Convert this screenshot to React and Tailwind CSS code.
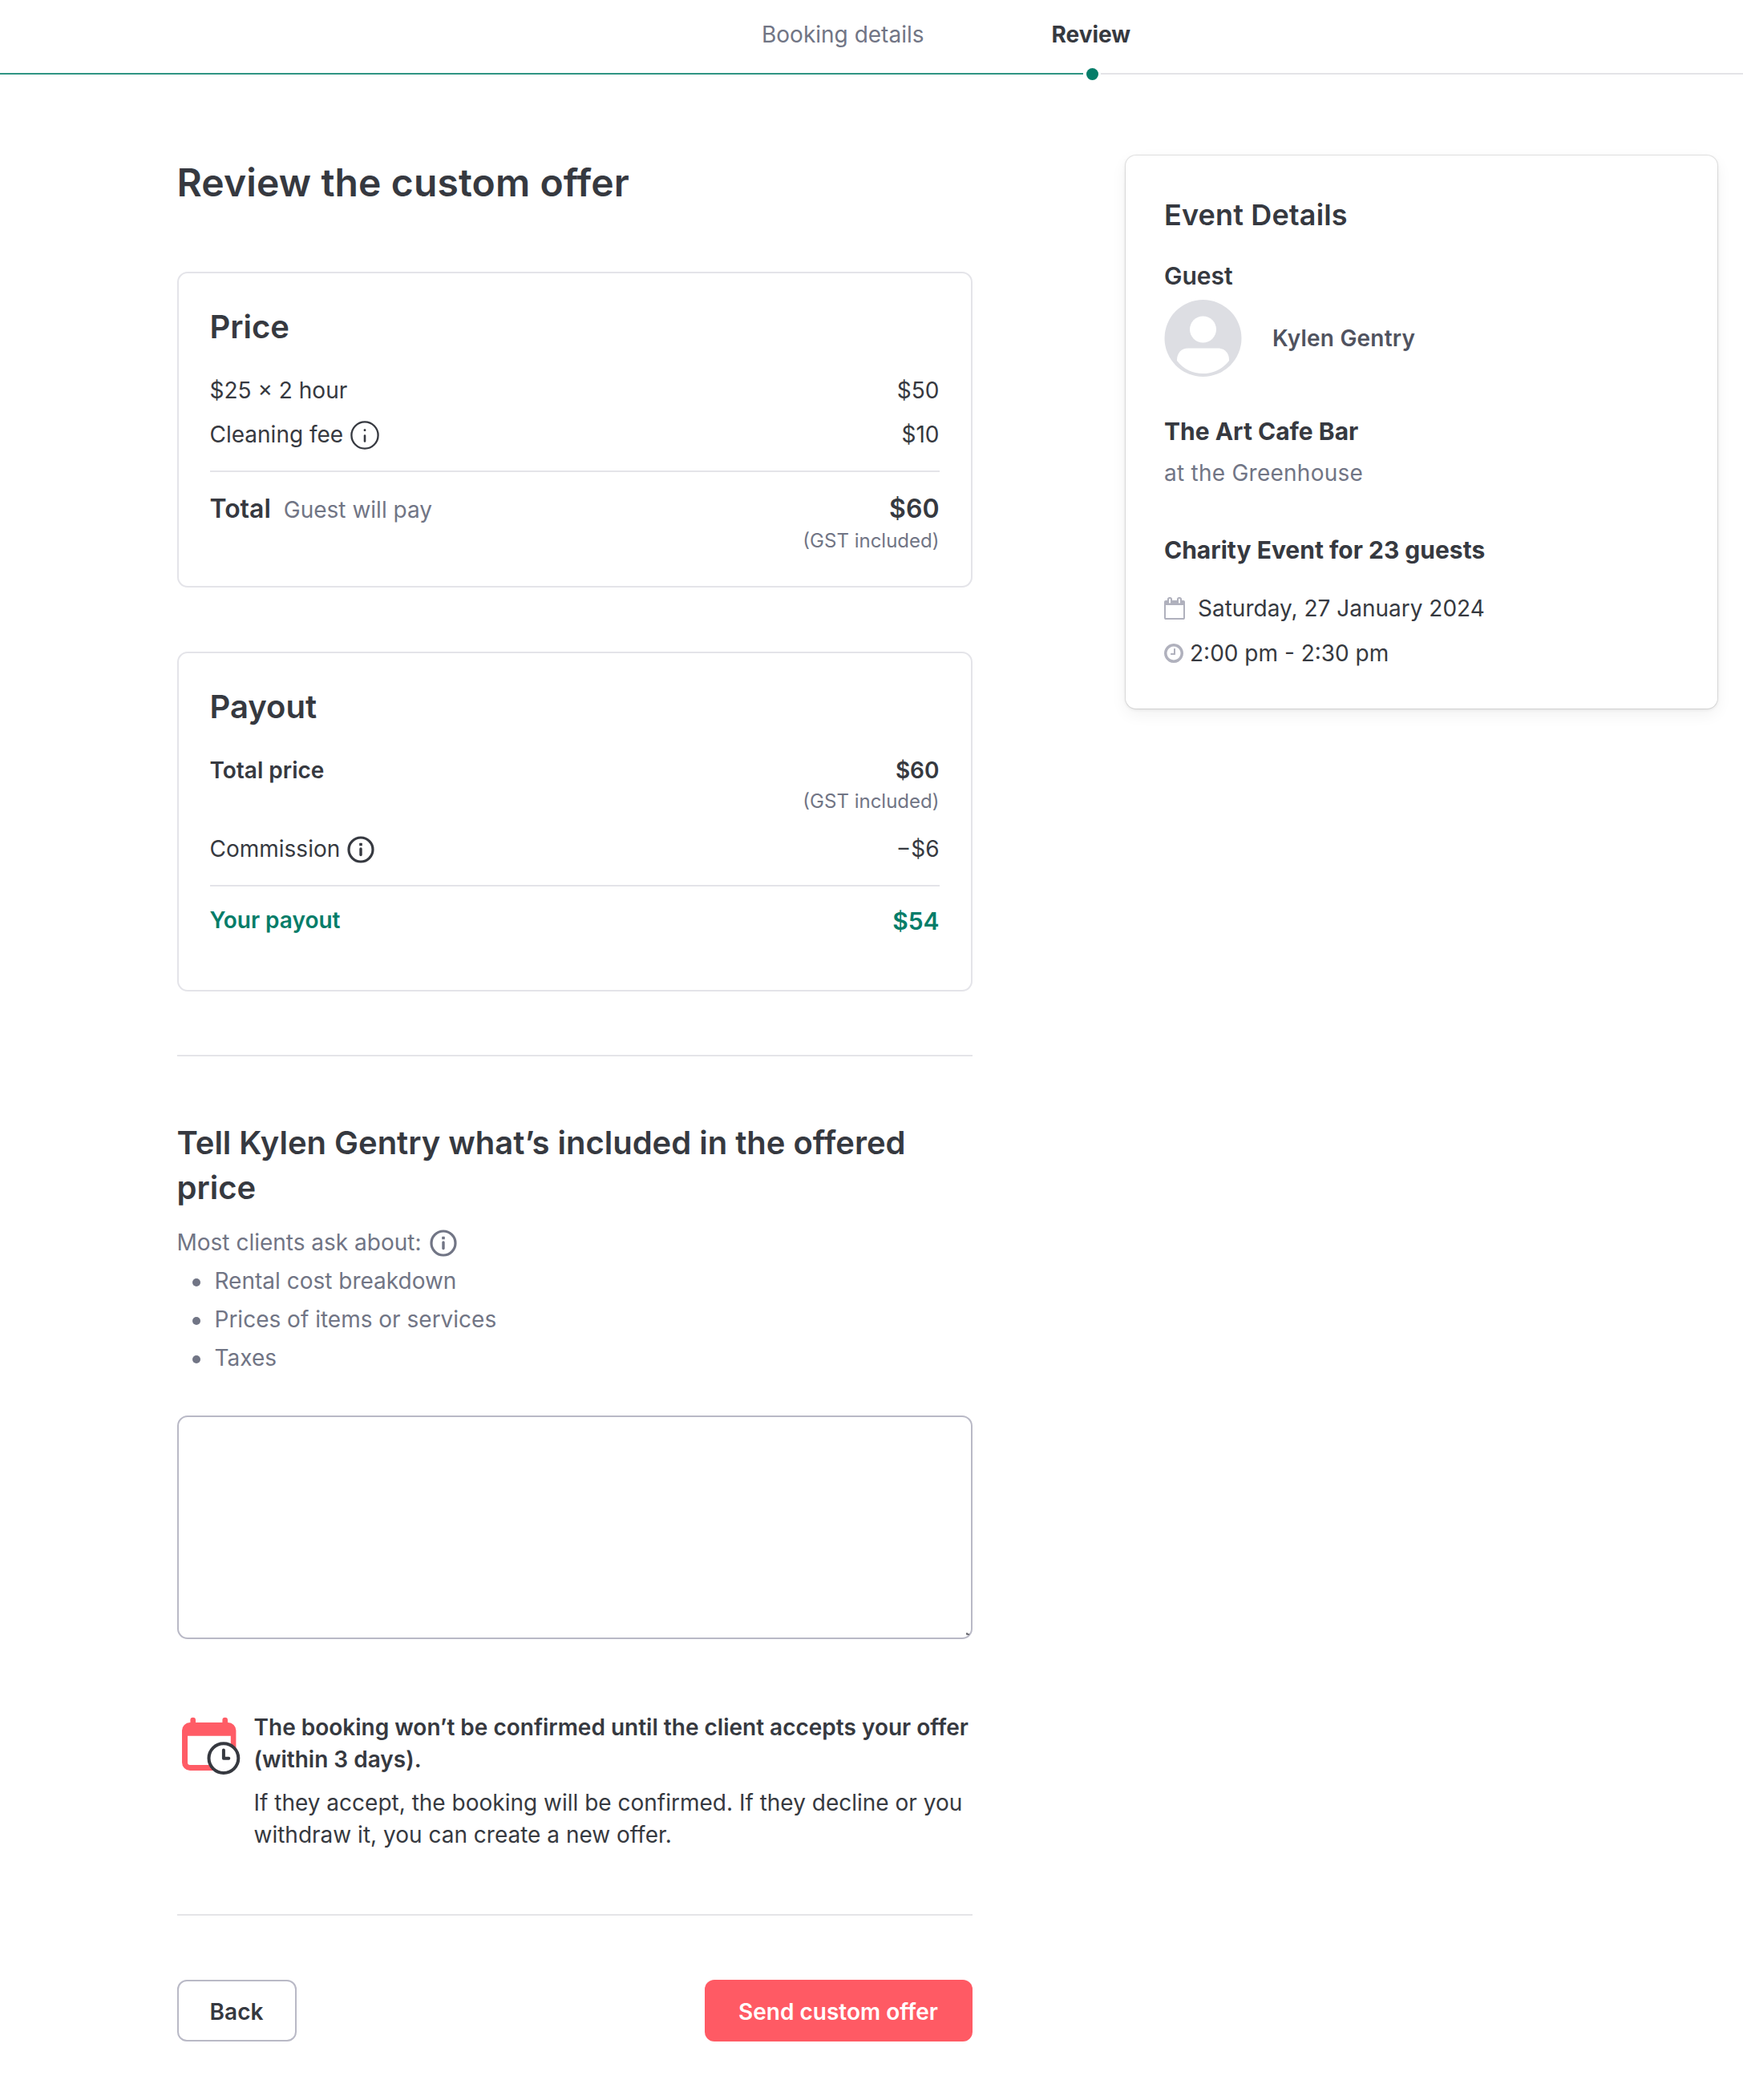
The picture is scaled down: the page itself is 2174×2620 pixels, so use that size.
import { useState } from 'react';

const InfoIcon = ({ thin = false, className = '' }) => (
    thin ? (
        <svg width="36" height="36" viewBox="0 0 36 36" fill="none" className={className}>
            <circle cx="18" cy="18" r="16.6" stroke="currentColor" strokeWidth="2.3" />
            <rect x="16.7" y="10.3" width="2.6" height="2.6" rx="0.6" fill="currentColor" />
            <path d="M18 18.6v6.8" stroke="currentColor" strokeWidth="2.6" strokeLinecap="round" />
        </svg>
    ) : (
        <svg width="34" height="34" viewBox="0 0 34 34" fill="none" className={className}>
            <circle cx="17" cy="17" r="15" stroke="currentColor" strokeWidth="3.2" />
            <rect x="15.2" y="8.7" width="3.6" height="3.6" rx="0.6" fill="currentColor" />
            <path d="M17 16v7.6" stroke="currentColor" strokeWidth="3.4" strokeLinecap="round" />
        </svg>
    )
);

const CalendarClockIcon = () => (
    <svg width="80" height="82" viewBox="0 0 80 82" fill="none" className="shrink-0">
        <path d="M19.7 11v8M59.7 11v8" stroke="#ff5c66" strokeWidth="6.6" strokeLinecap="round" />
        <path
            fillRule="evenodd"
            d="M16 14h47.4a10 10 0 0 1 10 10v40a10 10 0 0 1-10 10H16A10 10 0 0 1 6 64V24a10 10 0 0 1 10-10zM13 30.7V64a3 3 0 0 0 3 3h50.8V30.7z"
            fill="#ff5c66"
        />
        <circle cx="57.9" cy="58.6" r="18.4" fill="#fff" stroke="#363940" strokeWidth="4" />
        <path d="M57.9 48.4v10.4h6.4" stroke="#363940" strokeWidth="4" strokeLinecap="round" strokeLinejoin="round" />
    </svg>
);

const Avatar = () => (
    <svg width="97" height="96" viewBox="0 0 97 96" className="shrink-0">
        <circle cx="48.5" cy="48" r="48" fill="#dddee3" />
        <circle cx="48.5" cy="37" r="16.5" fill="#fff" />
        <path d="M30 60.5h37c8.5 0 14 6 14 14.5v1C73 86.5 61.5 92 48.5 92S24 86.5 16 76v-1c0-8.5 5.5-14.5 14-14.5z" fill="#fff" />
    </svg>
);

const CalendarIcon = () => (
    <svg width="26" height="28" viewBox="64 0 1664 1792" fill="#b0b1bd" className="shrink-0">
        <path d="M192 1664h1408v-1024h-1408v1024zM576 448v-288q0-14-9-23t-23-9h-64q-14 0-23 9t-9 23v288q0 14 9 23t23 9h64q14 0 23-9t9-23zm768 0v-288q0-14-9-23t-23-9h-64q-14 0-23 9t-9 23v288q0 14 9 23t23 9h64q14 0 23-9t9-23zm384-64v1280q0 52-38 90t-90 38h-1408q-52 0-90-38t-38-90v-1280q0-52 38-90t90-38h128v-96q0-66 47-113t113-47h64q66 0 113 47t47 113v96h384v-96q0-66 47-113t113-47h64q66 0 113 47t47 113v96h128q52 0 90 38t38 90z" />
    </svg>
);

const ClockIcon = () => (
    <svg width="24" height="24" viewBox="128 128 1536 1536" fill="#b0b1bd" className="shrink-0">
        <path d="M1024 544v448q0 14-9 23t-23 9h-320q-14 0-23-9t-9-23v-64q0-14 9-23t23-9h224v-352q0-14 9-23t23-9h64q14 0 23 9t9 23zm416 352q0-148-73-273t-198-198-273-73-273 73-198 198-73 273 73 273 198 198 273 73 273-73 198-198 73-273zm224 0q0 209-103 385.5t-279.5 279.5-385.5 103-385.5-103-279.5-279.5-103-385.5 103-385.5 279.5-279.5 385.5-103 385.5 103 279.5 279.5 103 385.5z" />
    </svg>
);

const topics = ['Rental cost breakdown', 'Prices of items or services', 'Taxes'];

const App = () => {
    const [message, setMessage] = useState('');

    return (
        <div className="w-[2174px] min-h-[2620px] bg-white font-[Inter,sans-serif] text-[28px] leading-[40px] text-[#363940]">
            {/* Steps */}
            <header>
                <div className="flex gap-[159px] h-[91px] pt-[23px] pl-[950px]">
                    <span className="text-[#717585]">Booking details</span>
                    <span className="font-bold">Review</span>
                </div>
                <div className="flex items-center h-[2px]">
                    <div className="w-[1351px] h-[2px] bg-[#2f9583]"></div>
                    <div className="w-[15px] h-[15px] mx-[3.5px] rounded-full bg-[#057d69] shrink-0"></div>
                    <div className="flex-1 h-[2px] bg-[#e4e4e7]"></div>
                </div>
            </header>

            <div className="flex items-start">
                <main className="w-[992px] ml-[220.5px] pt-[105px]">
                    <h1 className="text-[48px] leading-[60px] font-semibold tracking-[0.13px]">Review the custom offer</h1>

                    {/* Price */}
                    <section className="mt-[81px] border-2 border-[#e4e4e9] rounded-[13px] pt-[39px] px-[39px] pb-[40px]">
                        <h2 className="text-[40px] leading-[56px] font-semibold">Price</h2>
                        <div className="flex justify-between mt-[31px]">
                            <span>$25 × 2 hour</span>
                            <span>$50</span>
                        </div>
                        <div className="flex justify-between mt-[15px]">
                            <div className="flex items-center gap-[9px]">
                                <span>Cleaning fee</span>
                                <InfoIcon thin className="mt-px" />
                            </div>
                            <span>$10</span>
                        </div>
                        <div className="h-[2px] bg-[#e4e4e9] mt-[25px]"></div>
                        <div className="flex justify-between items-baseline mt-[22px]">
                            <div className="flex items-baseline gap-4">
                                <span className="text-[32px] leading-[48px] font-semibold">Total</span>
                                <span className="text-[#717585]">Guest will pay</span>
                            </div>
                            <div className="text-right">
                                <div className="text-[32px] leading-[48px] font-semibold">$60</div>
                                <div className="text-[24px] leading-8 text-[#717585]">(GST included)</div>
                            </div>
                        </div>
                    </section>

                    {/* Payout */}
                    <section className="mt-20 border-2 border-[#e4e4e9] rounded-[13px] pt-[39px] px-[39px] pb-[67px]">
                        <h2 className="text-[40px] leading-[56px] font-semibold">Payout</h2>
                        <div className="flex justify-between mt-[31px]">
                            <span className="font-semibold">Total price</span>
                            <div className="text-right">
                                <div className="font-semibold">$60</div>
                                <div className="text-[24px] leading-8 mt-[3px] text-[#717585]">(GST included)</div>
                            </div>
                        </div>
                        <div className="flex justify-between mt-[23px]">
                            <div className="flex items-center gap-[9px]">
                                <span>Commission</span>
                                <InfoIcon className="mt-[2px]" />
                            </div>
                            <span>−$6</span>
                        </div>
                        <div className="h-[2px] bg-[#e4e4e9] mt-[25px]"></div>
                        <div className="flex justify-between mt-[22px] h-10 font-semibold text-[#057d69]">
                            <span>Your payout</span>
                            <span className="text-[30px] mt-px">$54</span>
                        </div>
                    </section>

                    <div className="h-[2px] bg-[#e4e4e9] mt-[79px]"></div>

                    {/* Message to the guest */}
                    <h2 className="mt-20 text-[40px] leading-[56px] font-semibold tracking-[-0.02px]">
                        Tell Kylen Gentry what’s included in the offered price
                    </h2>
                    <div className="mt-4 leading-[48px] text-[#717585]">
                        <div className="flex items-center gap-[10px]">
                            <span>Most clients ask about:</span>
                            <InfoIcon className="mt-px" />
                        </div>
                        <ul>
                            {topics.map((topic) => (
                                <li key={topic} className="flex items-center">
                                    <span className="w-[10px] h-[10px] ml-[19px] mr-[18px] mt-[3px] rounded-full bg-[#717585]"></span>
                                    {topic}
                                </li>
                            ))}
                        </ul>
                    </div>
                    <div className="relative mt-12">
                        <textarea
                            value={message}
                            onChange={(e) => setMessage(e.target.value)}
                            className="block w-full h-[279px] p-5 border-2 border-[#b9b9c6] rounded-[13px] resize-none outline-none"
                        />
                        {/* Resize grip */}
                        <svg width="4" height="4" viewBox="0 0 4 4" className="absolute right-[4px] bottom-[4px]">
                            <path d="M1 0v2h3" stroke="#55565c" strokeWidth="1.5" fill="none" />
                        </svg>
                    </div>

                    <div className="flex items-start gap-4 mt-[90px]">
                        <CalendarClockIcon />
                        <div className="-mr-1">
                            <p className="font-semibold">The booking won’t be confirmed until the client accepts your offer (within 3 days).</p>
                            <p className="mt-[14px]">If they accept, the booking will be confirmed. If they decline or you withdraw it, you can create a new offer.</p>
                        </div>
                    </div>

                    <div className="h-[2px] bg-[#e4e4e7] mt-[79px]"></div>

                    <div className="flex justify-between mt-20">
                        <button className="w-[149px] h-[77px] pt-[2px] border-2 border-[#b9b9c6] rounded-[12px] font-semibold">Back</button>
                        <button className="w-[334px] h-[77px] pt-[2px] rounded-[12px] bg-[#ff5a64] text-white font-semibold">Send custom offer</button>
                    </div>
                </main>

                {/* Event details */}
                <aside className="w-[738px] h-[690px] ml-[191.5px] mt-[101px] pt-12 pl-12 rounded-[13px] bg-white shadow-[0_0_0_1px_rgba(0,0,0,0.09),0_1px_4px_rgba(0,0,0,0.1),0_7px_20px_rgba(0,0,0,0.06)]">
                    <h2 className="text-[36px] leading-[52px] font-semibold tracking-[0.15px]">Event Details</h2>
                    <h3 className="mt-7 text-[30px] leading-[44px] font-semibold">Guest</h3>
                    <div className="flex items-center gap-[38px] mt-2">
                        <Avatar />
                        <span className="font-semibold tracking-[0.2px] text-[#50535f]">Kylen Gentry</span>
                    </div>
                    <h3 className="mt-[46px] text-[30px] leading-[44px] font-bold">The Art Cafe Bar</h3>
                    <p className="mt-[10px] tracking-[0.25px] text-[#717585]">at the Greenhouse</p>
                    <h3 className="mt-[54px] text-[30px] leading-[44px] font-bold">Charity Event for 23 guests</h3>
                    <div className="flex items-center gap-4 mt-[31px]">
                        <CalendarIcon />
                        <span>Saturday, 27 January 2024</span>
                    </div>
                    <div className="flex items-center gap-2 mt-4">
                        <ClockIcon />
                        <span>2:00 pm - 2:30 pm</span>
                    </div>
                </aside>
            </div>
        </div>
    );
};

export default App;
